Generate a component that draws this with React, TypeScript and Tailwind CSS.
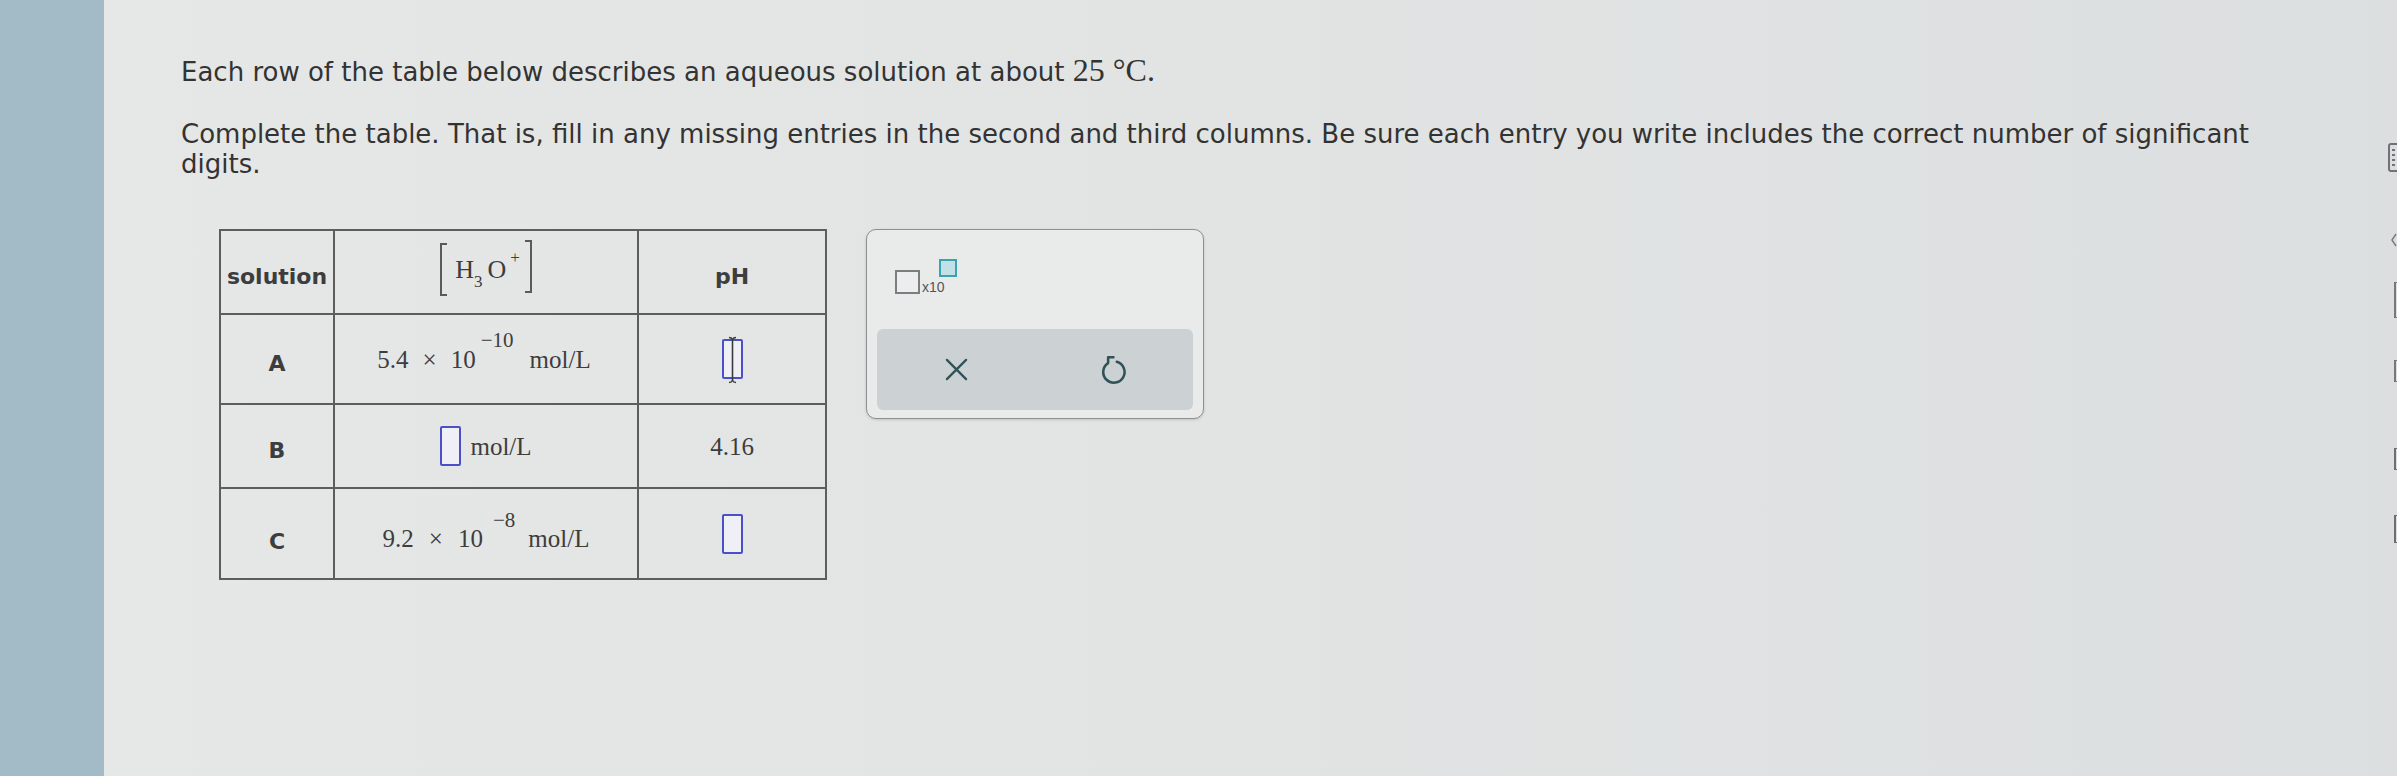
import React from "react";

const sans = "font-['DejaVu_Sans','Verdana',sans-serif]";
const serif = "font-['Liberation_Serif','Times_New_Roman',serif]";

function AnswerBox({ cursor = false }: { cursor?: boolean }) {
  return (
    <span className="relative inline-block w-[21px] h-[40px] rounded-[2px] border-2 border-[#4c50c8] bg-[#eef0f6]">
      {cursor && (
        <svg className="absolute left-[2px] -top-[5px]" width="13" height="48" viewBox="0 0 13 48" fill="none">
          <path d="M6.5 3v42" stroke="#3b3b3b" strokeWidth="1.6" />
          <path d="M3 1.5c1.5 0 3 .8 3.5 2 .5-1.2 2-2 3.5-2M3 46.5c1.5 0 3-.8 3.5-2 .5 1.2 2 2 3.5 2" stroke="#3b3b3b" strokeWidth="1.3" />
        </svg>
      )}
    </span>
  );
}

function Bracket({ side }: { side: "l" | "r" }) {
  return (
    <span
      className={
        side === "l"
          ? "inline-block w-[7px] h-[53px] border-l-2 border-t-2 border-b-2 border-[#5a5a5a]"
          : "inline-block w-[7px] h-[53px] border-r-2 border-t-2 border-b-2 border-[#5a5a5a]"
      }
    />
  );
}

function UndoIcon() {
  return (
    <svg width="28" height="32" viewBox="0 0 26 30" fill="none" stroke="#2f5357" strokeWidth="2.4" strokeLinecap="round" strokeLinejoin="round">
      <path d="M12.5 3H7.5v5.5A10 10 0 1 0 15.6 7.3" />
    </svg>
  );
}

export default function App() {
  const cell = "flex items-center justify-center border-r-2 border-b-2 border-[#5d5d5d]";

  return (
    <div className="flex h-[776px] w-[2397px] overflow-hidden bg-linear-to-r from-[#e6e7e7] via-[#e2e4e4] to-[#dcdfe0]">
      {/* left rail */}
      <div className="w-[104px] shrink-0 bg-[#a3bbc7]" />

      {/* main question */}
      <div className="flex-1 pl-[77px] pt-[57px]">
        <div className={`${sans} w-[2119px] text-[26px] leading-[30px] text-[#333]`}>
          <p>
            Each row of the table below describes an aqueous solution at about{" "}
            <span className={`${serif} text-[32px] leading-[24px]`}>25 °C.</span>
          </p>
          <p className="mt-[32px]">
            Complete the table. That is, fill in any missing entries in the second and third columns. Be sure each entry you
            write includes the correct number of significant digits.
          </p>
        </div>

        <div className="mt-[50px] ml-[38px] flex items-start">
          {/* data table */}
          <div className="grid grid-cols-[114px_304px_188px] grid-rows-[84px_90px_84px_91px] border-l-2 border-t-2 border-[#5d5d5d] text-[#3d3d3d]">
            <div className={`${cell} ${sans} pt-[8px] text-[22px] font-bold`}>solution</div>
            <div className={cell}>
              <div className="flex items-center -mt-[5px]">
                <Bracket side="l" />
                <span className={`${serif} ml-[8px] text-[26px] leading-none whitespace-nowrap`}>
                  H<span className="relative top-[9px] text-[17px]">3</span>
                  <span className="ml-[5px]">O</span>
                  <span className="relative -top-[15px] ml-[4px] text-[17px]">+</span>
                </span>
                <span className="ml-[5px]">
                  <Bracket side="r" />
                </span>
              </div>
            </div>
            <div className={`${cell} ${sans} pt-[8px] text-[22px] font-bold`}>pH</div>

            <div className={`${cell} ${sans} pt-[8px] text-[22px] font-bold`}>A</div>
            <div className={cell}>
              <div className={`${serif} -ml-[4px] text-[25px] leading-none whitespace-nowrap`}>
                5.4<span className="mx-[14px]">×</span>10
                <span className="relative bottom-[21px] ml-[5px] text-[21px]">−10</span>
                <span className="ml-[16px]">mol/L</span>
              </div>
            </div>
            <div className={cell}>
              <AnswerBox cursor />
            </div>

            <div className={`${cell} ${sans} pt-[8px] text-[22px] font-bold`}>B</div>
            <div className={cell}>
              <div className="flex items-center">
                <AnswerBox />
                <span className={`${serif} ml-[9px] text-[25px] leading-none`}>mol/L</span>
              </div>
            </div>
            <div className={`${cell} ${serif} text-[25px] leading-none`}>4.16</div>

            <div className={`${cell} ${sans} pt-[16px] text-[22px] font-bold`}>C</div>
            <div className={`${cell} pt-[10px]`}>
              <div className={`${serif} text-[25px] leading-none whitespace-nowrap`}>
                9.2<span className="mx-[15px]">×</span>10
                <span className="relative bottom-[20px] ml-[10px] text-[21px]">−8</span>
                <span className="ml-[13px]">mol/L</span>
              </div>
            </div>
            <div className={cell}>
              <AnswerBox />
            </div>
          </div>

          {/* answer palette */}
          <div className="ml-[39px] flex h-[190px] w-[338px] flex-col rounded-[10px] border border-[#8d9092] bg-[#e9eaea] shadow-[0_1px_3px_rgba(0,0,0,0.15)]">
            <div className="flex items-start pl-[28px] pt-[29px]">
              <span className="mt-[11px] h-[24px] w-[25px] border-2 border-[#7b7d7e] bg-[#ecedee]" />
              <span className="ml-[2px] mt-[21px] font-['Liberation_Sans',Arial,sans-serif] text-[14px] leading-none text-[#555]">x10</span>
              <span className="-ml-[6px] h-[18px] w-[18px] border-2 border-[#3aa2b0] bg-[#c2e1e4]" />
            </div>
            <div className="mx-[10px] mb-[8px] mt-auto grid h-[81px] grid-cols-2 items-center rounded-[6px] bg-[#ccd2d4]">
              <div className="flex justify-center">
                <svg width="23" height="23" viewBox="0 0 24 24" fill="none" stroke="#2f5357" strokeWidth="2.4" strokeLinecap="round">
                  <path d="M2 2l20 20M22 2L2 22" />
                </svg>
              </div>
              <div className="flex justify-center">
                <UndoIcon />
              </div>
            </div>
          </div>
        </div>
      </div>

      {/* clipped right toolbar */}
      <div className="flex w-[9px] shrink-0 flex-col overflow-hidden">
        <div className="mt-[143px] flex h-[29px] w-[16px] shrink-0 flex-col justify-center gap-[3px] rounded-[3px] border-2 border-[#6f7375] pl-[2px]">
          <span className="h-[2px] w-[3px] bg-[#6f7375]" />
          <span className="h-[2px] w-[3px] bg-[#6f7375]" />
          <span className="h-[2px] w-[3px] bg-[#6f7375]" />
          <span className="h-[2px] w-[3px] bg-[#6f7375]" />
        </div>
        <svg className="mt-[61px] ml-[3px] shrink-0" width="6" height="14" viewBox="0 0 6 14" fill="none">
          <path d="M5 1L1 7l4 6" stroke="#7a7e80" strokeWidth="1.5" />
        </svg>
        <span className="mt-[35px] ml-[6px] h-[36px] w-[6px] shrink-0 border-l-2 border-t border-b border-[#75797b]" />
        <span className="mt-[42px] ml-[6px] h-[22px] w-[6px] shrink-0 border-l-2 border-t border-b border-[#75797b]" />
        <span className="mt-[66px] ml-[6px] h-[22px] w-[6px] shrink-0 border-l-2 border-t border-b border-[#6b6f71]" />
        <span className="mt-[45px] ml-[6px] h-[28px] w-[6px] shrink-0 border-l-2 border-t border-b border-[#6b6f71]" />
      </div>
    </div>
  );
}
